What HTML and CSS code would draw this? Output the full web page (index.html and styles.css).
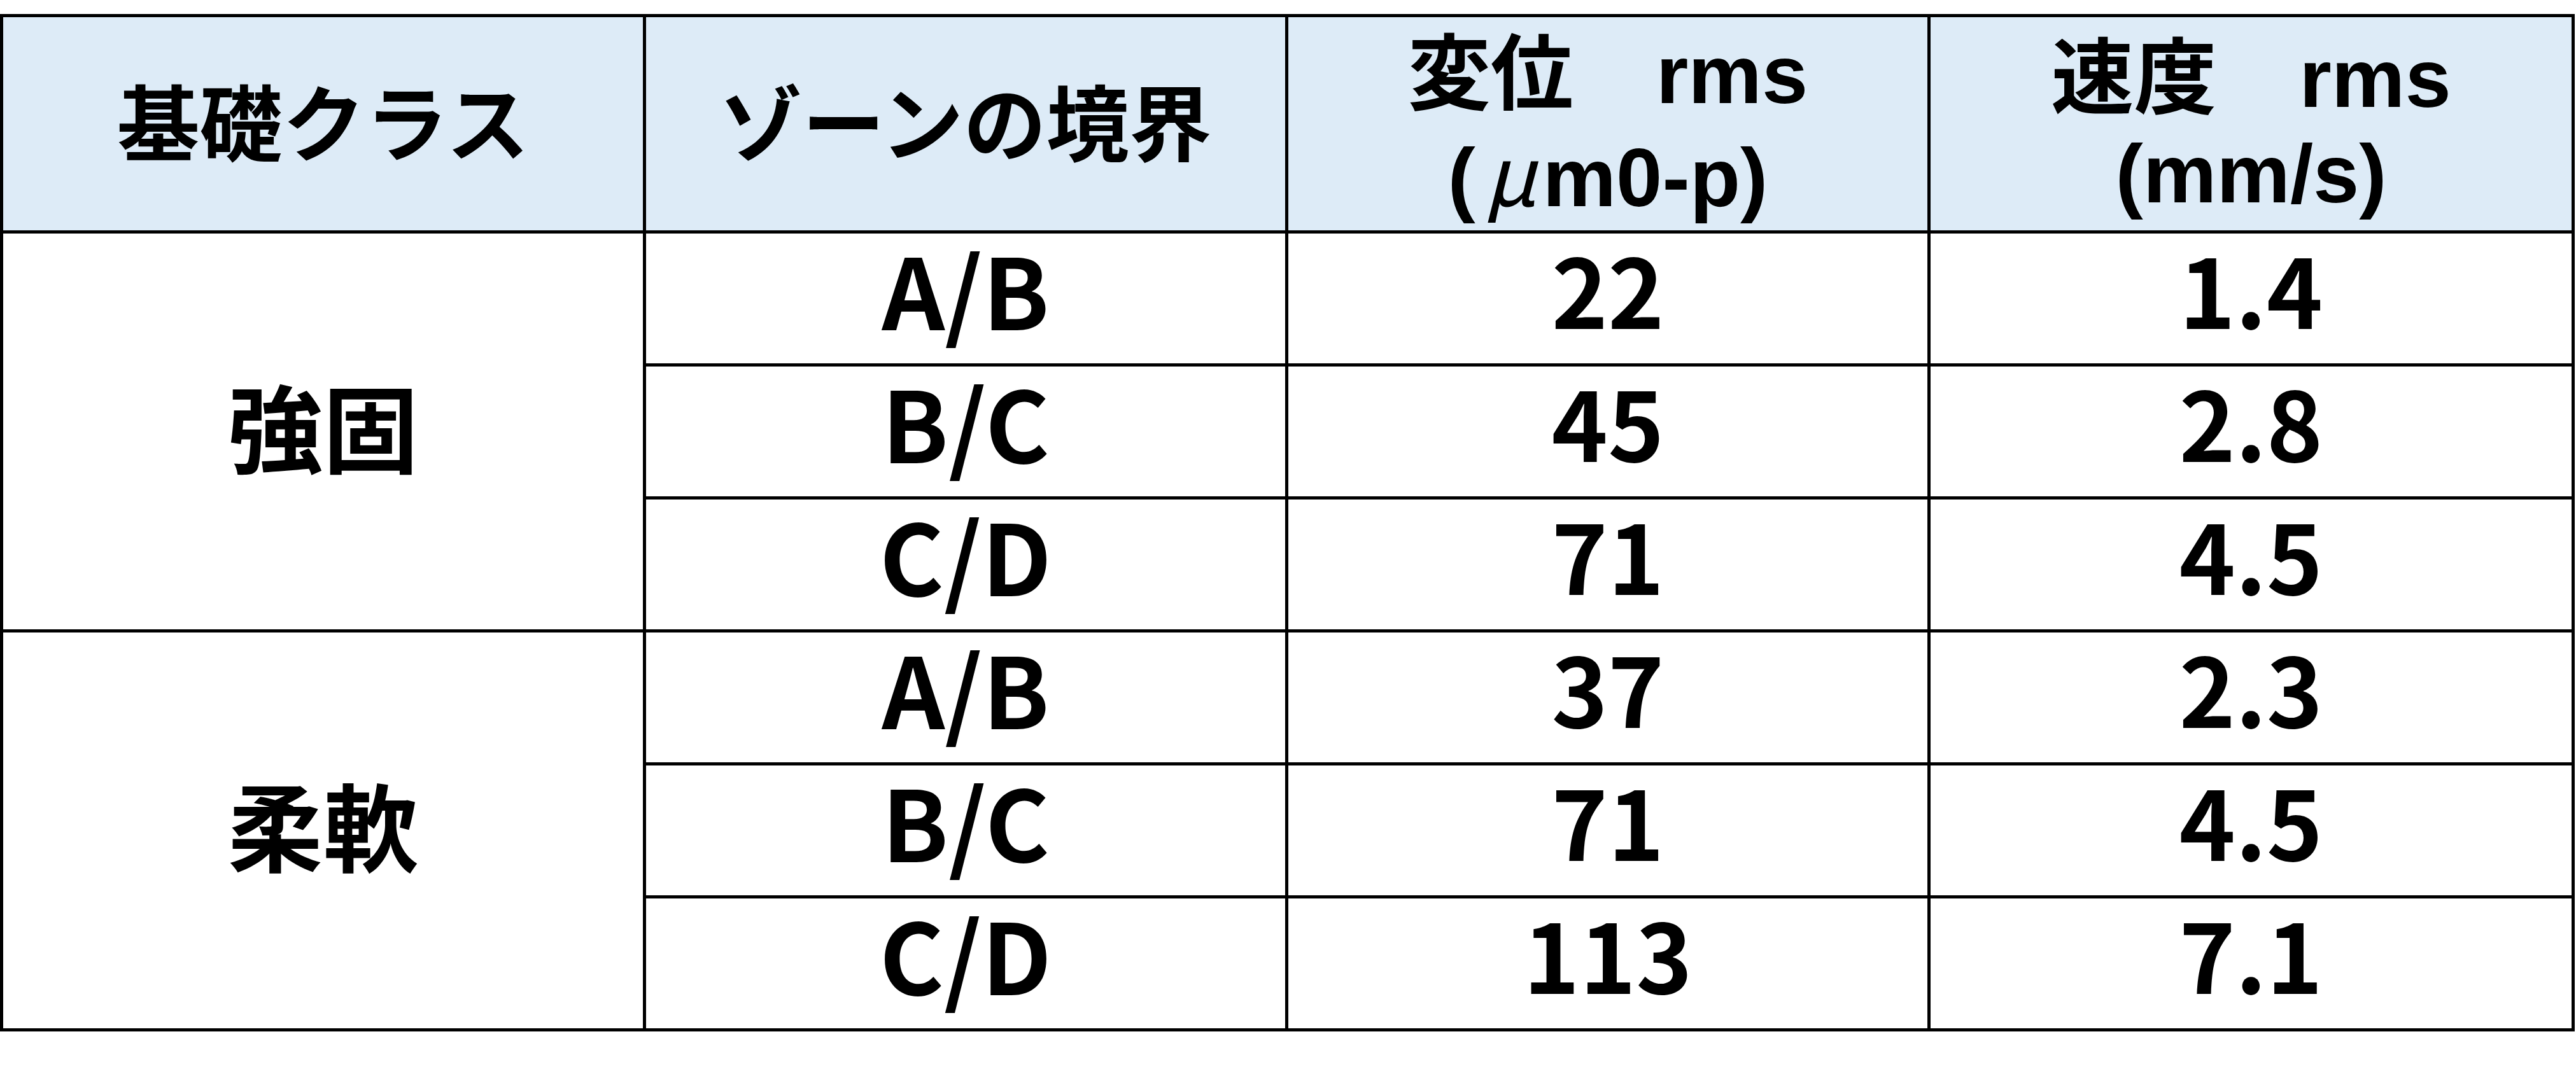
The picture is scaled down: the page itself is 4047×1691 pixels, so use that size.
FILE: index.html
```html
<!DOCTYPE html>
<html lang="ja">
<head>
<meta charset="utf-8">
<title>基礎クラス ゾーンの境界</title>
<link rel="stylesheet" href="styles.css">
</head>
<body>
<table class="zone-table">
  <colgroup>
    <col class="c1"><col class="c2"><col class="c3"><col class="c4">
  </colgroup>
  <thead>
    <tr class="head-row">
      <th>基礎クラス</th>
      <th>ゾーンの境界</th>
      <th>変位　rms<br>(<span class="mu">μ</span>m0-p)</th>
      <th>速度　rms<br>(mm/s)</th>
    </tr>
  </thead>
  <tbody>
    <tr class="body-row">
      <td class="group" rowspan="3">強固</td>
      <td class="latin">A/B</td><td>22</td><td>1.4</td>
    </tr>
    <tr class="body-row">
      <td class="latin">B/C</td><td>45</td><td>2.8</td>
    </tr>
    <tr class="body-row">
      <td class="latin">C/D</td><td>71</td><td>4.5</td>
    </tr>
    <tr class="body-row">
      <td class="group" rowspan="3">柔軟</td>
      <td class="latin">A/B</td><td>37</td><td>2.3</td>
    </tr>
    <tr class="body-row">
      <td class="latin">B/C</td><td>71</td><td>4.5</td>
    </tr>
    <tr class="body-row">
      <td class="latin">C/D</td><td>113</td><td>7.1</td>
    </tr>
  </tbody>
</table>
</body>
</html>
```

FILE: styles.css
```css
html, body {
  margin: 0;
  padding: 0;
  background: #ffffff;
}

body {
  padding-top: 22px;
}

.zone-table {
  width: 4045px;
  table-layout: fixed;
  border-collapse: separate;
  border-spacing: 0;
  border-top: 5px solid #000;
  border-left: 5px solid #000;
  color: #000;
}

.c1 { width: 1010px; }
.c2 { width: 1009px; }
.c3 { width: 1009px; }
.c4 { width: 1012px; }

.zone-table th,
.zone-table td {
  border-right: 5px solid #000;
  border-bottom: 5px solid #000;
  padding: 0;
  text-align: center;
  vertical-align: middle;
  font-weight: 700;
}

.head-row {
  height: 340px;
}

.head-row th {
  background: #ddebf7;
  font-family: "Liberation Sans", "Noto Sans CJK JP", sans-serif;
  font-size: 130px;
  line-height: 150px;
  padding-top: 6px;
}

.mu {
  font-family: "Noto Sans CJK JP", sans-serif;
  font-style: italic;
  font-weight: 400;
  margin: 0 10px 0 14px;
}

.body-row {
  height: 209px;
}

.body-row td {
  font-family: "Noto Sans CJK JP", sans-serif;
  font-size: 150px;
  line-height: 150px;
  padding-bottom: 34px;
}

.body-row td.latin {
  font-size: 154px;
}

.body-row td.group {
  padding-bottom: 22px;
}
```
